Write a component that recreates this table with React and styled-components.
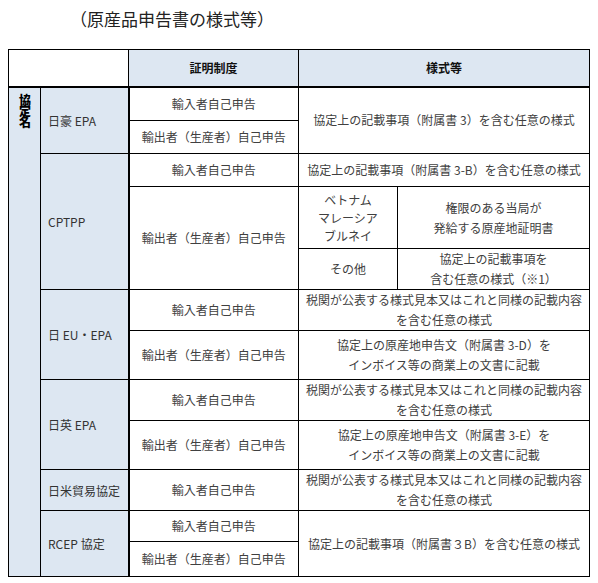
import React from 'react';
import styled, { createGlobalStyle } from 'styled-components';

// GLOBAL
const GlobalStyle = createGlobalStyle`
  body {
    margin: 0;
    background: #fff;
    font-family: "Noto Sans CJK JP", "Noto Sans", sans-serif;
  }
`;

// STYLES
const Page = styled.div`
  width: 598px;
  padding: 0 0 0 8px;
  box-sizing: border-box;
`;

const Title = styled.h2`
  margin: 0;
  height: 49px;
  padding: 10px 0 0 62px;
  box-sizing: border-box;
  font-family: "Liberation Serif", "Noto Sans CJK JP", serif;
  font-weight: normal;
  font-size: 17px;
  line-height: 22px;
  color: #222;
`;

const Table = styled.table`
  width: 581px;
  table-layout: fixed;
  border-collapse: collapse;
  font-size: 12px;
  color: #404040;
`;

const Row = styled.tr`
  height: ${p => p.$h}px;
`;

const HeadCell = styled.th`
  border: 1px solid #000;
  border-bottom: 2px solid #000;
  background: ${p => (p.$blank ? '#fff' : '#dde7f2')};
  color: #111;
  font-weight: bold;
  text-align: center;
  padding: 0;
`;

const SideLabel = styled.td`
  border: 1px solid #000;
  background: #dde7f2;
  vertical-align: top;
  text-align: center;
  padding: 6px 0 0;
`;

const SideText = styled.span`
  display: inline-block;
  writing-mode: vertical-rl;
  text-orientation: upright;
  color: #000;
  font-weight: 900;
  font-size: 12px;
  line-height: 14px;
  letter-spacing: -1px;
`;

const NameCell = styled.td`
  border: 1px solid #000;
  border-right: 2px solid #000;
  background: #dde7f2;
  padding: 0 0 0 7px;
  color: #333;
  white-space: nowrap;
`;

const Cell = styled.td`
  border: 1px solid #000;
  text-align: center;
  padding: 0;
  line-height: ${p => p.$lh || 20}px;
  white-space: nowrap;
`;

const IMPORTER = '輸入者自己申告';
const EXPORTER = '輸出者（生産者）自己申告';
const CUSTOMS = <>税関が公表する様式見本又はこれと同様の記載内容<br />を含む任意の様式</>;

// APP
export default function App() {
  return (
    <Page>
      <GlobalStyle />
      <Title>（原産品申告書の様式等）</Title>
      <Table>
        <colgroup>
          <col style={{ width: 32 }} />
          <col style={{ width: 88 }} />
          <col style={{ width: 170 }} />
          <col style={{ width: 99 }} />
          <col style={{ width: 192 }} />
        </colgroup>
        <tbody>
          <Row $h={37}>
            <HeadCell $blank colSpan={2} />
            <HeadCell>証明制度</HeadCell>
            <HeadCell colSpan={2}>様式等</HeadCell>
          </Row>

          <Row $h={34}>
            <SideLabel rowSpan={12}>
              <SideText>協定名</SideText>
            </SideLabel>
            <NameCell rowSpan={2}>日豪 EPA</NameCell>
            <Cell>{IMPORTER}</Cell>
            <Cell colSpan={2} rowSpan={2}>協定上の記載事項（附属書 3）を含む任意の様式</Cell>
          </Row>
          <Row $h={33}>
            <Cell>{EXPORTER}</Cell>
          </Row>

          <Row $h={33}>
            <NameCell rowSpan={3}>CPTPP</NameCell>
            <Cell>{IMPORTER}</Cell>
            <Cell colSpan={2}>協定上の記載事項（附属書 3-B）を含む任意の様式</Cell>
          </Row>
          <Row $h={62}>
            <Cell rowSpan={2}>{EXPORTER}</Cell>
            <Cell $lh={18}>ベトナム<br />マレーシア<br />ブルネイ</Cell>
            <Cell>権限のある当局が<br />発給する原産地証明書</Cell>
          </Row>
          <Row $h={40}>
            <Cell>その他</Cell>
            <Cell>協定上の記載事項を<br />含む任意の様式（※1）</Cell>
          </Row>

          <Row $h={41}>
            <NameCell rowSpan={2}>日 EU・EPA</NameCell>
            <Cell>{IMPORTER}</Cell>
            <Cell colSpan={2}>{CUSTOMS}</Cell>
          </Row>
          <Row $h={49}>
            <Cell>{EXPORTER}</Cell>
            <Cell colSpan={2}>協定上の原産地申告文（附属書 3-D）を<br />インボイス等の商業上の文書に記載</Cell>
          </Row>

          <Row $h={41}>
            <NameCell rowSpan={2}>日英 EPA</NameCell>
            <Cell>{IMPORTER}</Cell>
            <Cell colSpan={2}>{CUSTOMS}</Cell>
          </Row>
          <Row $h={49}>
            <Cell>{EXPORTER}</Cell>
            <Cell colSpan={2}>協定上の原産地申告文（附属書 3-E）を<br />インボイス等の商業上の文書に記載</Cell>
          </Row>

          <Row $h={41}>
            <NameCell>日米貿易協定</NameCell>
            <Cell>{IMPORTER}</Cell>
            <Cell colSpan={2}>{CUSTOMS}</Cell>
          </Row>

          <Row $h={31}>
            <NameCell rowSpan={2}>RCEP 協定</NameCell>
            <Cell>{IMPORTER}</Cell>
            <Cell colSpan={2} rowSpan={2}>協定上の記載事項（附属書３B）を含む任意の様式</Cell>
          </Row>
          <Row $h={35}>
            <Cell>{EXPORTER}</Cell>
          </Row>
        </tbody>
      </Table>
    </Page>
  );
}
